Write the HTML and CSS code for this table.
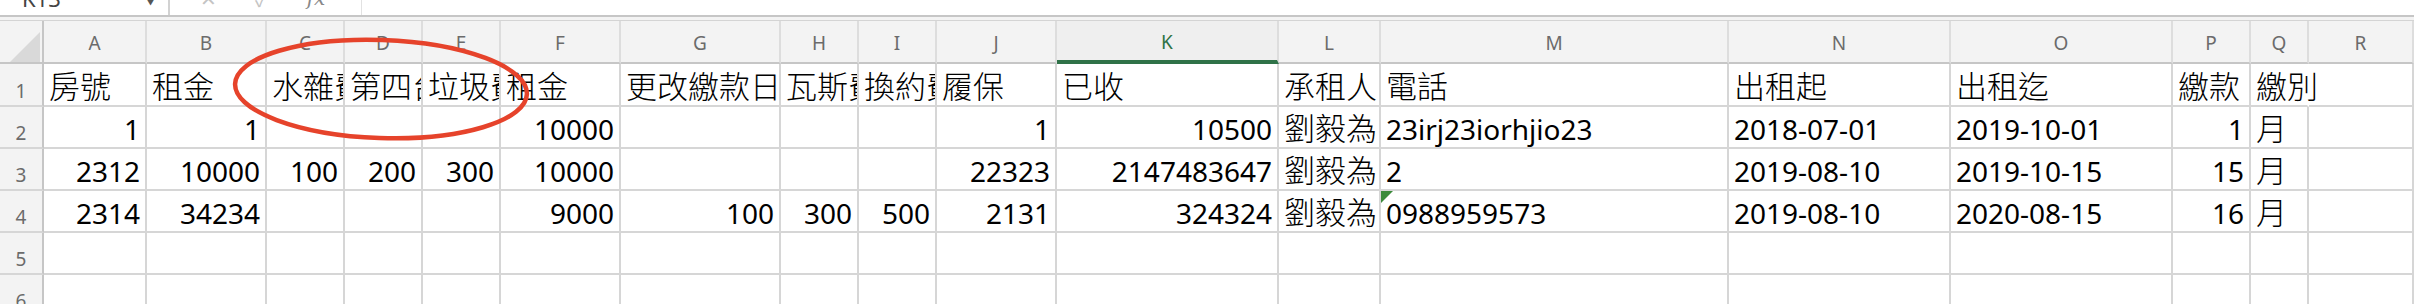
FILE: index.html
```html
<!DOCTYPE html>
<html lang="zh-Hant">
<head>
    <meta charset="UTF-8">
    <meta name="viewport" content="width=device-width, initial-scale=1.0">
    <title>租金紀錄</title>
    <link rel="stylesheet" href="styles.css">
</head>
<body>
    <div class="page">
        <!-- Name box and formula bar (scrolled, only the lower edge shows) -->
        <div class="toolbar">
            <div class="namebox"><span>K13</span><span class="drop">&#9660;</span></div>
            <div class="fx-icons"><span>&#10005;</span><span>&#10003;</span><span class="fx">fx</span></div>
            <div class="formula"></div>
        </div>
        <div class="strip"></div>

        <div class="sheet">
            <!-- Column headers -->
            <div class="cell corner"></div>
            <div class="cell col">A</div>
            <div class="cell col">B</div>
            <div class="cell col">C</div>
            <div class="cell col">D</div>
            <div class="cell col">E</div>
            <div class="cell col">F</div>
            <div class="cell col">G</div>
            <div class="cell col">H</div>
            <div class="cell col">I</div>
            <div class="cell col">J</div>
            <div class="cell col on">K</div>
            <div class="cell col">L</div>
            <div class="cell col">M</div>
            <div class="cell col">N</div>
            <div class="cell col">O</div>
            <div class="cell col">P</div>
            <div class="cell col">Q</div>
            <div class="cell col">R</div>

            <!-- Row 1: field names -->
            <div class="cell rh">1</div>
            <div class="cell zh">房號</div>
            <div class="cell zh">租金</div>
            <div class="cell zh">水雜費</div>
            <div class="cell zh">第四台</div>
            <div class="cell zh">垃圾費</div>
            <div class="cell zh">租金</div>
            <div class="cell zh">更改繳款日</div>
            <div class="cell zh">瓦斯費</div>
            <div class="cell zh">換約費</div>
            <div class="cell zh">履保</div>
            <div class="cell zh">已收</div>
            <div class="cell zh">承租人</div>
            <div class="cell zh">電話</div>
            <div class="cell zh">出租起</div>
            <div class="cell zh">出租迄</div>
            <div class="cell zh">繳款</div>
            <div class="cell zh spill">繳別</div>
            <div class="cell"></div>

            <!-- Row 2 -->
            <div class="cell rh">2</div>
            <div class="cell num">1</div>
            <div class="cell num">1</div>
            <div class="cell"></div>
            <div class="cell"></div>
            <div class="cell"></div>
            <div class="cell num">10000</div>
            <div class="cell"></div>
            <div class="cell"></div>
            <div class="cell"></div>
            <div class="cell num">1</div>
            <div class="cell num">10500</div>
            <div class="cell zh">劉毅為</div>
            <div class="cell">23irj23iorhjio23</div>
            <div class="cell">2018-07-01</div>
            <div class="cell">2019-10-01</div>
            <div class="cell num">1</div>
            <div class="cell zh">月</div>
            <div class="cell"></div>

            <!-- Row 3 -->
            <div class="cell rh">3</div>
            <div class="cell num">2312</div>
            <div class="cell num">10000</div>
            <div class="cell num">100</div>
            <div class="cell num">200</div>
            <div class="cell num">300</div>
            <div class="cell num">10000</div>
            <div class="cell"></div>
            <div class="cell"></div>
            <div class="cell"></div>
            <div class="cell num">22323</div>
            <div class="cell num">2147483647</div>
            <div class="cell zh">劉毅為</div>
            <div class="cell">2</div>
            <div class="cell">2019-08-10</div>
            <div class="cell">2019-10-15</div>
            <div class="cell num">15</div>
            <div class="cell zh">月</div>
            <div class="cell"></div>

            <!-- Row 4 -->
            <div class="cell rh">4</div>
            <div class="cell num">2314</div>
            <div class="cell num">34234</div>
            <div class="cell"></div>
            <div class="cell"></div>
            <div class="cell"></div>
            <div class="cell num">9000</div>
            <div class="cell num">100</div>
            <div class="cell num">300</div>
            <div class="cell num">500</div>
            <div class="cell num">2131</div>
            <div class="cell num">324324</div>
            <div class="cell zh">劉毅為</div>
            <div class="cell flag">0988959573</div>
            <div class="cell">2019-08-10</div>
            <div class="cell">2020-08-15</div>
            <div class="cell num">16</div>
            <div class="cell zh">月</div>
            <div class="cell"></div>

            <!-- Rows 5-6: empty -->
            <div class="cell rh">5</div>
            <div class="cell"></div><div class="cell"></div><div class="cell"></div><div class="cell"></div><div class="cell"></div><div class="cell"></div>
            <div class="cell"></div><div class="cell"></div><div class="cell"></div><div class="cell"></div><div class="cell"></div><div class="cell"></div>
            <div class="cell"></div><div class="cell"></div><div class="cell"></div><div class="cell"></div><div class="cell"></div><div class="cell"></div>

            <div class="cell rh">6</div>
            <div class="cell"></div><div class="cell"></div><div class="cell"></div><div class="cell"></div><div class="cell"></div><div class="cell"></div>
            <div class="cell"></div><div class="cell"></div><div class="cell"></div><div class="cell"></div><div class="cell"></div><div class="cell"></div>
            <div class="cell"></div><div class="cell"></div><div class="cell"></div><div class="cell"></div><div class="cell"></div><div class="cell"></div>
        </div>

        <!-- Hand-drawn mark around the fee columns -->
        <svg class="mark" width="320" height="120" viewBox="0 0 320 120">
            <ellipse cx="157" cy="57" rx="146" ry="49" transform="rotate(2 157 57)"
                     fill="none" stroke="#e6432b" stroke-width="4.5"/>
        </svg>
    </div>
</body>
</html>
```

FILE: styles.css
```css
html, body {
    margin: 0;
    background-color: #fff;
    overflow: hidden;
}
body {
    font-family: "Noto Sans", "Noto Sans CJK TC", sans-serif;
}
.page {
    position: relative;
    width: 2414px;
    height: 304px;
    overflow: hidden;
}

/* toolbar */
.toolbar {
    display: flex;
    align-items: flex-end;
    height: 15px;
    overflow: hidden;
    border-bottom: 2px solid #c6c6c6;
}
.namebox {
    box-sizing: border-box;
    width: 170px;
    height: 34px;
    display: flex;
    align-items: center;
    justify-content: space-between;
    padding: 0 11px 0 22px;
    border-right: 2px solid #d2d2d2;
    font-size: 22px;
    color: #444;
}
.drop {
    font-size: 13px;
    color: #555;
}
.fx-icons {
    box-sizing: border-box;
    width: 192px;
    height: 34px;
    display: flex;
    align-items: center;
    gap: 38px;
    padding-left: 30px;
    border-right: 1px solid #e2e2e2;
    font-size: 20px;
    color: #c4c4c4;
}
.fx {
    font-family: "DejaVu Serif", serif;
    font-style: italic;
    color: #888;
}
.formula {
    flex: 1;
    height: 34px;
}
.strip {
    height: 3px;
    background-color: #f3f3f3;
    border-bottom: 1px solid #d4d4d4;
}

/* grid */
.sheet {
    display: grid;
    grid-template-columns: 44px 103px 120px 78px 78px 78px 120px 160px 78px 78px 120px 222px 102px 348px 222px 222px 78px 58px 1fr;
    grid-template-rows: 43px 43px repeat(5, 42px);
}
.cell {
    box-sizing: border-box;
    display: flex;
    align-items: flex-end;
    padding: 0 5px 4px 5px;
    border-right: 2px solid #d6d6d6;
    border-bottom: 2px solid #d6d6d6;
    overflow: hidden;
    white-space: nowrap;
    font-size: 28px;
    line-height: 1;
    color: #000;
}
.num {
    justify-content: flex-end;
}
.zh {
    font-family: "Noto Sans CJK TC", sans-serif;
    font-weight: 300;
    font-size: 31px;
    padding-bottom: 5px;
}
.spill {
    overflow: visible;
    border-right-color: #fff;
}
.flag {
    position: relative;
}
.flag::before {
    content: "";
    position: absolute;
    top: 0;
    left: 0;
    width: 12px;
    height: 12px;
    background-color: #3b8a3a;
    clip-path: polygon(0 0, 100% 0, 0 100%);
}

/* headers */
.col {
    align-items: center;
    justify-content: center;
    padding: 3px 0 0 0;
    background-color: #f3f3f3;
    border-right-color: #dddddd;
    border-bottom-color: #c6c6c6;
    font-size: 19px;
    color: #6b6b6b;
}
.col.on {
    color: #2e7245;
    background-color: #efefef;
    border-bottom: 4px solid #2f7248;
}
.corner {
    justify-content: flex-end;
    padding: 0 2px 0 0;
    background-color: #f3f3f3;
    border-right-color: #c6c6c6;
    border-bottom-color: #c6c6c6;
}
.corner::after {
    content: "";
    width: 30px;
    height: 30px;
    background-color: #d9d9d9;
    clip-path: polygon(100% 0, 100% 100%, 0 100%);
}
.rh {
    justify-content: center;
    padding: 0 0 4px 0;
    background-color: #f3f3f3;
    border-right-color: #c6c6c6;
    font-size: 19px;
    color: #6b6b6b;
}

/* annotation */
.mark {
    position: absolute;
    left: 224px;
    top: 32px;
    pointer-events: none;
}
```
